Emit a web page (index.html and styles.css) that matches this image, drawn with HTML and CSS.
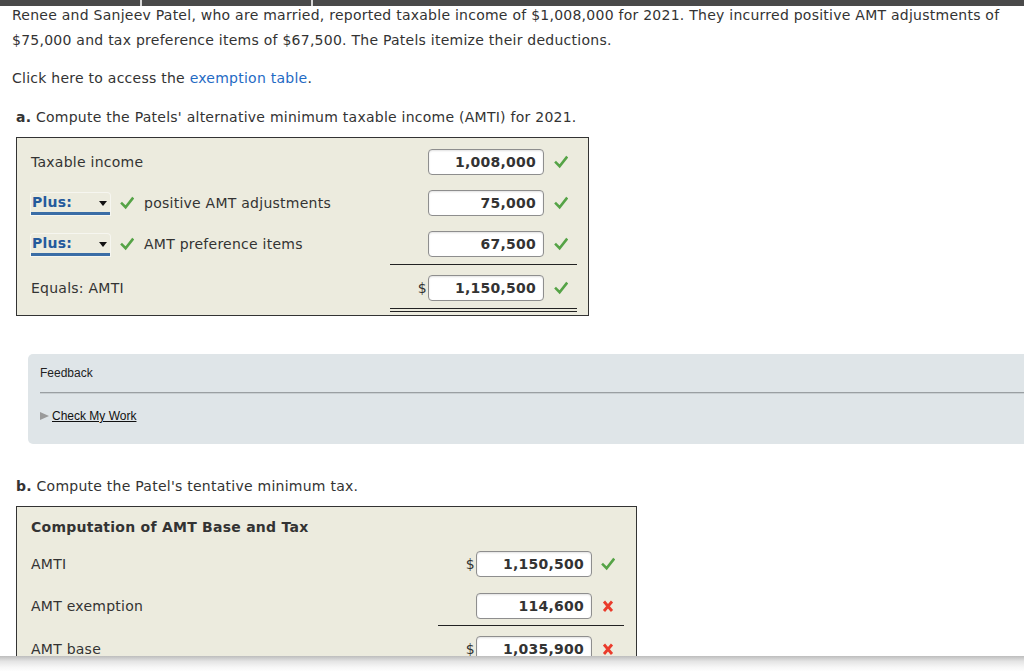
FILE: index.html
```html
<!DOCTYPE html>
<html lang="en">
<head>
<meta charset="utf-8">
<title>AMT Computation</title>
<link rel="stylesheet" href="styles.css">
</head>
<body>
<div class="tabbar">
  <span class="tab tab-first"></span>
  <span class="tab tab-second"></span>
  <span class="tab tab-rest"></span>
</div>

<main class="page">
  <p class="intro">Renee and Sanjeev Patel, who are married, reported taxable income of $1,008,000 for 2021. They incurred positive AMT adjustments of $75,000 and tax preference items of $67,500. The Patels itemize their deductions.</p>
  <p class="intro ref">Click here to access the <a class="link" href="#exemption">exemption table</a>.</p>

  <section class="part">
    <p class="prompt"><b>a.</b> Compute the Patels' alternative minimum taxable income (AMTI) for 2021.</p>
    <div class="worksheet ws-a">
      <div class="row">
        <span class="label">Taxable income</span>
        <div class="cell">
          <span class="field">1,008,000</span>
          <span class="mark"><svg class="ok" viewBox="0 0 14 14"><path d="M2 7.6 L5.6 11.2 L12.4 2.6"/></svg></span>
        </div>
      </div>
      <div class="row">
        <span class="label">
          <span class="pick">Plus:<i class="caret"></i></span>
          <svg class="ok pick-ok" viewBox="0 0 14 14"><path d="M2 7.6 L5.6 11.2 L12.4 2.6"/></svg>
          positive AMT adjustments
        </span>
        <div class="cell">
          <span class="field">75,000</span>
          <span class="mark"><svg class="ok" viewBox="0 0 14 14"><path d="M2 7.6 L5.6 11.2 L12.4 2.6"/></svg></span>
        </div>
      </div>
      <div class="row">
        <span class="label">
          <span class="pick">Plus:<i class="caret"></i></span>
          <svg class="ok pick-ok" viewBox="0 0 14 14"><path d="M2 7.6 L5.6 11.2 L12.4 2.6"/></svg>
          AMT preference items
        </span>
        <div class="cell cell-sub">
          <span class="field">67,500</span>
          <span class="mark"><svg class="ok" viewBox="0 0 14 14"><path d="M2 7.6 L5.6 11.2 L12.4 2.6"/></svg></span>
        </div>
      </div>
      <div class="row row-after-sub">
        <span class="label">Equals: AMTI</span>
        <div class="cell cell-total">
          <span class="dollar">$</span>
          <span class="field">1,150,500</span>
          <span class="mark"><svg class="ok" viewBox="0 0 14 14"><path d="M2 7.6 L5.6 11.2 L12.4 2.6"/></svg></span>
        </div>
      </div>
    </div>
  </section>

  <section class="feedback">
    <div class="feedback-title">Feedback</div>
    <div class="feedback-rule"></div>
    <div class="feedback-toggle"><i class="tri"></i><a class="check-link" href="#check">Check My Work</a></div>
  </section>

  <section class="part part-b">
    <p class="prompt"><b>b.</b> Compute the Patel's tentative minimum tax.</p>
    <div class="worksheet ws-b">
      <div class="ws-title">Computation of AMT Base and Tax</div>
      <div class="row row-first">
        <span class="label">AMTI</span>
        <div class="cell">
          <span class="dollar">$</span>
          <span class="field">1,150,500</span>
          <span class="mark"><svg class="ok" viewBox="0 0 14 14"><path d="M2 7.6 L5.6 11.2 L12.4 2.6"/></svg></span>
        </div>
      </div>
      <div class="row">
        <span class="label">AMT exemption</span>
        <div class="cell cell-sub">
          <span class="field">114,600</span>
          <span class="mark"><svg class="bad" viewBox="0 0 14 14"><path d="M3 2.5 L11 12 M11 2.5 L3 12"/></svg></span>
        </div>
      </div>
      <div class="row row-after-sub">
        <span class="label">AMT base</span>
        <div class="cell">
          <span class="dollar">$</span>
          <span class="field">1,035,900</span>
          <span class="mark"><svg class="bad" viewBox="0 0 14 14"><path d="M3 2.5 L11 12 M11 2.5 L3 12"/></svg></span>
        </div>
      </div>
    </div>
  </section>
</main>

<div class="shade"></div>
</body>
</html>
```

FILE: styles.css
```css
html, body {
  margin: 0;
  background: #fff;
}

body {
  font-family: "DejaVu Sans", Verdana, sans-serif;
  font-size: 14px;
  letter-spacing: 0.25px;
  color: #333;
  overflow: hidden;
}

/* dark tab strip pinned to the top of the frame */
.tabbar {
  position: fixed;
  top: 0;
  left: 0;
  right: 0;
  height: 6px;
  display: flex;
  background: #4a4a4a;
  z-index: 2;
}
.tab { height: 100%; }
.tab-first { width: 140px; border-right: 2px solid #d8d8d8; }
.tab-second { width: 169px; border-right: 2px solid #d8d8d8; }
.tab-rest { flex: 1; }

.page {
  padding: 3px 12px 0 12px;
}

.intro {
  margin: 0;
  line-height: 25px;
  max-width: 1006px;
}
.ref { margin-top: 13px; }

.link {
  color: #1f6bc4;
  text-decoration: none;
}

.part {
  margin-top: 14px;
  padding-left: 4px;
}
.prompt {
  margin: 0;
  line-height: 25px;
}
.prompt b { color: #333; }

/* answer worksheets */
.worksheet {
  box-sizing: border-box;
  margin-top: 7px;
  background: #ecebde;
  border: 1px solid #333;
}
.ws-a {
  width: 573px;
  padding: 11px 11px 3px 14px;
}
.ws-b {
  width: 621px;
  padding: 10px 12px 20px 14px;
}
.ws-title {
  font-weight: bold;
  line-height: 20px;
}

.row {
  display: flex;
  align-items: flex-start;
  min-height: 26px;
}
.row + .row { margin-top: 15px; }
.ws-b .row-first { margin-top: 14px; }
.ws-b .row + .row { margin-top: 16px; }
.row.row-after-sub { margin-top: 10px; }
.ws-b .row.row-after-sub { margin-top: 10px; }

.label {
  flex: 1;
  display: flex;
  align-items: center;
  height: 26px;
  white-space: nowrap;
}

.cell {
  display: flex;
  align-items: center;
  justify-content: flex-end;
  width: 187px;
}
.ws-b .cell { width: 186px; }
.cell-sub {
  padding-bottom: 7px;
  border-bottom: 1px solid #222;
}
.ws-b .cell-sub { padding-bottom: 6px; }
.cell-total {
  padding-bottom: 7px;
  border-bottom: 4px double #222;
}

.dollar {
  margin-right: 1px;
  line-height: 26px;
}

.field {
  box-sizing: border-box;
  width: 116px;
  height: 26px;
  line-height: 24px;
  padding-right: 7px;
  text-align: right;
  font-weight: bold;
  color: #333;
  background: #fff;
  border: 1px solid #8e8e8e;
  border-radius: 4px;
  box-shadow: inset 0 1px 2px rgba(0, 0, 0, 0.12);
}

.mark {
  width: 33px;
  display: flex;
  justify-content: center;
  align-items: center;
}
.ws-b .mark { width: 32px; }

.ok, .bad {
  width: 14px;
  height: 14px;
  fill: none;
  stroke-linecap: square;
}
.ok { stroke: #55a346; stroke-width: 2.6; }
.bad { stroke: #ea3b2b; stroke-width: 2.8; stroke-linecap: butt; }

/* drop-down answer picker */
.pick {
  position: relative;
  box-sizing: border-box;
  width: 79px;
  height: 22px;
  margin-top: 1px;
  padding-left: 1px;
  line-height: 19px;
  font-weight: bold;
  color: #245a9c;
  border-radius: 3px 3px 0 0;
  border-bottom: 3px solid #3a6da6;
  box-shadow: 0 0 0 1px rgba(255, 255, 255, 0.55);
}
.caret {
  position: absolute;
  right: 3px;
  top: 8px;
  width: 0;
  height: 0;
  border-left: 4px solid transparent;
  border-right: 4px solid transparent;
  border-top: 5px solid #111;
}
.pick-ok {
  margin: 0 10px 0 10px;
}

/* feedback panel */
.feedback {
  margin: 38px -40px 0 16px;
  height: 90px;
  box-sizing: border-box;
  padding: 12px 0 0 12px;
  background: #dfe5e8;
  border-radius: 5px;
  font-family: "Liberation Sans", Arial, sans-serif;
  font-size: 12px;
  letter-spacing: 0;
  color: #222;
}
.feedback-title { line-height: 14px; }
.feedback-rule {
  margin-top: 12px;
  height: 1px;
  background: #9a9fa2;
  border-bottom: 1px solid #c9cfd2;
}
.feedback-toggle {
  margin-top: 15px;
  display: flex;
  align-items: center;
  line-height: 14px;
}
.tri {
  width: 0;
  height: 0;
  margin-right: 3px;
  border-top: 4.5px solid transparent;
  border-bottom: 4.5px solid transparent;
  border-left: 9px solid #9a9a9a;
}
.check-link {
  color: #111;
  text-decoration: underline;
}

.part-b { margin-top: 30px; }

/* soft edge where the frame scrolls out of view */
.shade {
  position: fixed;
  left: 0;
  right: 0;
  bottom: 0;
  height: 15px;
  background: linear-gradient(#bdbdbd, #e4e4e4 35%, #f7f7f7 75%, #fdfdfd);
  z-index: 2;
}
```
